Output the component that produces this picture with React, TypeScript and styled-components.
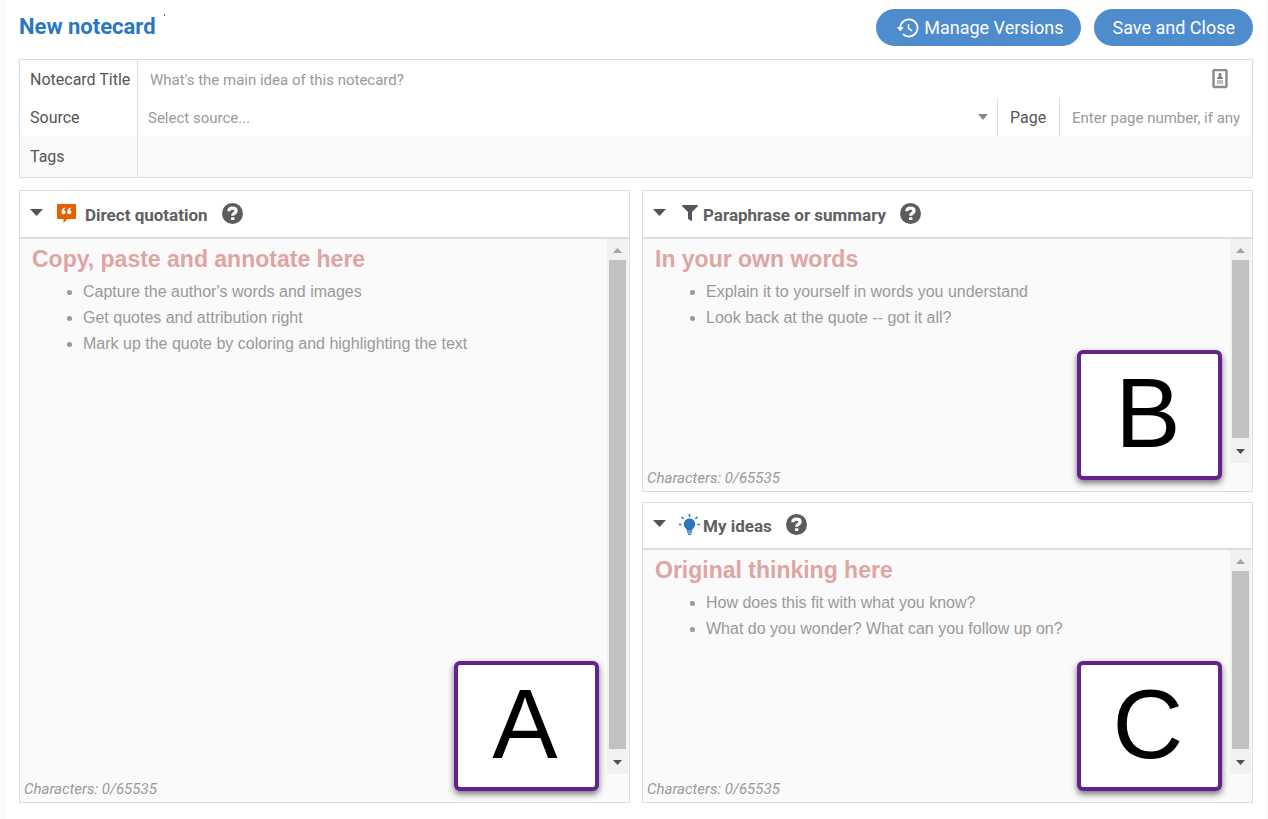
import React from 'react';
import styled, { createGlobalStyle } from 'styled-components';
import { FaFilter } from 'react-icons/fa';

const GlobalStyle = createGlobalStyle`
  *, *::before, *::after { box-sizing: border-box; }
  body {
    margin: 0;
    background: #fafafa;
    color: #555;
    font-family: Roboto, "Liberation Sans", sans-serif;
    font-size: 16px;
  }
`;

const Sheet = styled.main`
  display: flex;
  flex-direction: column;
  min-height: 100vh;
  margin: 0 3px 0 6px;
  padding: 9px 12px 16px 13px;
  background: #fff;
`;

const Header = styled.header`
  display: flex;
  justify-content: space-between;
  align-items: flex-start;
  margin-bottom: 13px;
`;

const TitleGroup = styled.div`
  display: flex;
  align-items: flex-start;
  gap: 8px;
  padding-top: 5px;
`;

const PageTitle = styled.h1`
  margin: 0;
  font-size: 22px;
  line-height: 25px;
  font-weight: 700;
  color: #2a77c0;
`;

const Tick = styled.span`
  width: 1px;
  height: 2px;
  background: #2a77c0;
`;

const Actions = styled.div`
  display: flex;
  gap: 13px;
`;

const PillButton = styled.button`
  display: flex;
  align-items: center;
  gap: 5px;
  height: 37px;
  padding: 0 18px;
  border: 0;
  border-radius: 19px;
  background: #4e8ccd;
  color: #fff;
  font-family: inherit;
  font-size: 18px;
`;

const Details = styled.section`
  margin-bottom: 12px;
  border: 1px solid #ddd;
`;

const DetailRow = styled.div<{ $shaded?: boolean }>`
  display: flex;
  min-height: ${p => (p.$shaded ? 41 : 38)}px;
  background: ${p => (p.$shaded ? '#fafafa' : '#fff')};
`;

const FieldLabel = styled.label<{ $inner?: boolean }>`
  display: flex;
  flex: none;
  align-items: center;
  width: ${p => (p.$inner ? 63 : 118)}px;
  padding-left: ${p => (p.$inner ? 12 : 10)}px;
  border: 0 solid #ddd;
  border-right-width: 1px;
  border-left-width: ${p => (p.$inner ? 1 : 0)}px;
  white-space: nowrap;
`;

const TextInput = styled.input<{ $narrow?: boolean }>`
  flex: ${p => (p.$narrow ? '0 0 192px' : '1 1 0')};
  min-width: 0;
  padding: 2px 12px 0;
  border: 0;
  background: transparent;
  color: #555;
  font-family: inherit;
  font-size: 15px;
  &::placeholder { color: #999; opacity: 1; }
`;

const BadgeButton = styled.button`
  display: flex;
  align-items: center;
  padding: 0;
  margin-right: 24px;
  border: 0;
  background: none;
`;

const SelectWrap = styled.div`
  display: flex;
  flex: 1;
  align-items: center;
  padding-right: 9px;
`;

const SourceSelect = styled.select`
  flex: 1;
  height: 100%;
  padding: 2px 10px 0;
  border: 0;
  appearance: none;
  background: transparent;
  color: #999;
  font-family: inherit;
  font-size: 15px;
`;

const Panels = styled.div`
  display: grid;
  flex: 1;
  grid-template-columns: 1fr 1fr;
  grid-template-rows: 1fr 1fr;
  gap: 10px 12px;
`;

const PanelBox = styled.section<{ $tall?: boolean }>`
  position: relative;
  display: flex;
  flex-direction: column;
  min-height: 260px;
  grid-row: ${p => (p.$tall ? 'span 2' : 'auto')};
  border: 1px solid #ddd;
  background: #fafafa;
`;

const PanelHeader = styled.div<{ $compact?: boolean }>`
  display: flex;
  align-items: center;
  height: ${p => (p.$compact ? 47 : 48)}px;
  padding: 0 10px;
  border-bottom: 2px solid #ddd;
  background: #fff;
`;

const CollapseButton = styled.button`
  display: flex;
  padding: 0 0 3px;
  border: 0;
  background: none;
`;

const IconSlot = styled.span<{ $gap: number }>`
  display: flex;
  justify-content: center;
  width: 21px;
  margin-left: 13px;
  margin-right: ${p => p.$gap}px;
  padding-bottom: 2px;
`;

const PanelTitle = styled.h2`
  margin: 0;
  padding-top: 2px;
  font-size: 17px;
  line-height: 24px;
  font-weight: 700;
  color: #606060;
`;

const HelpButton = styled.button`
  display: flex;
  margin-left: 14px;
  padding: 0 0 2px;
  border: 0;
  background: none;
`;

const PanelBody = styled.div`
  display: flex;
  flex: 1;
`;

const Prompt = styled.div`
  flex: 1;
  padding: 6px 12px 0;
  font-family: "Liberation Sans", Arial, sans-serif;
  color: #999;
`;

const PromptHeading = styled.h3`
  margin: 0 0 6px;
  font-size: 23px;
  line-height: 28px;
  color: #dea5a3;
`;

const PromptList = styled.ul`
  margin: 0;
  padding-left: 51px;
  line-height: 26px;
`;

const Track = styled.div`
  display: flex;
  flex-direction: column;
  align-items: center;
  width: 21px;
  margin-right: 1px;
  background: #f1f1f1;
`;

const Thumb = styled.div`
  flex: 1;
  width: 17px;
  background: #c1c1c1;
`;

const ArrowCell = styled.div<{ $end?: boolean }>`
  display: flex;
  align-items: center;
  height: ${p => (p.$end ? 25 : 21)}px;
  padding-top: 2px;
`;

const Counter = styled.p`
  height: 28px;
  margin: 0;
  padding: 0 4px;
  font-size: 15px;
  line-height: 30px;
  font-style: italic;
  color: #999;
`;

const Marker = styled.div`
  position: absolute;
  right: 30px;
  bottom: 11px;
  width: 145px;
  height: 130px;
  padding-right: 3px;
  border: 4px solid #65218c;
  border-radius: 6px;
  background: #fff;
  box-shadow: 0 3px 6px rgba(0, 0, 0, 0.55);
  color: #000;
  font-family: "Liberation Sans", Arial, sans-serif;
  font-size: 98px;
  line-height: 118px;
  text-align: center;
`;

function Triangle({ width, height, color, up }: { width: number; height: number; color: string; up?: boolean }) {
  const points = up ? `0,${height} ${width / 2},0 ${width},${height}` : `0,0 ${width},0 ${width / 2},${height}`;
  return (
    <svg width={width} height={height} aria-hidden="true">
      <polygon points={points} fill={color} />
    </svg>
  );
}

function HistoryIcon() {
  return (
    <svg width="25" height="22" viewBox="-1 0 25 22" fill="none" stroke="#fff" strokeWidth="1.7" aria-hidden="true">
      <path d="M5.300 11.200a8.600 8.600 0 1 1 2.700 6" />
      <path d="M1.800 10.300h7L5.300 14.200z" fill="#fff" stroke="none" />
      <path d="M13.500 7v4.300l3.600 2.600" strokeWidth="1.4" />
    </svg>
  );
}

function ContactBadgeIcon() {
  return (
    <svg width="16" height="20" viewBox="0 0 16 20" aria-hidden="true">
      <rect x="1.5" y="1" width="13" height="17" rx="1" fill="#fff" stroke="#8a8a8a" strokeWidth="2.400" />
      <circle cx="8" cy="5.500" r="1.500" fill="#777" />
      <path d="M5.200 10c0-2 1.200-3 2.800-3s2.800 1 2.800 3z" fill="#777" />
      <path d="M5 12h6M5 14h6" stroke="#aaa" strokeWidth="1.500" />
    </svg>
  );
}

function QuoteIcon() {
  return (
    <svg width="19" height="19" viewBox="0 0 19 19" aria-hidden="true">
      <path d="M1 0h17a1 1 0 0 1 1 1v13a1 1 0 0 1-1 1H10.500L6.500 19V15H1a1 1 0 0 1-1-1V1a1 1 0 0 1 1-1z" fill="#e65f00" />
      <path
        d="M8.300 3.500C6 4 4.500 5.500 4.500 8.200a2.100 2.100 0 1 0 2.300-2.100c.1-.8.600-1.400 1.500-1.700zM14 3.500c-2.300.5-3.800 2-3.800 4.700a2.100 2.100 0 1 0 2.300-2.100c.1-.8.600-1.400 1.500-1.700z"
        fill="#fff"
      />
    </svg>
  );
}

function BulbIcon() {
  return (
    <svg width="21" height="21" viewBox="0 0 21 21" aria-hidden="true">
      <path d="M10.500 4.600a5.700 5.700 0 0 0-3.200 10.400l.7 1.700h5l.7-1.700a5.700 5.700 0 0 0-3.200-10.400z" fill="#2a77c0" />
      <path
        d="M8 18h5M9 20.200h3M10.500 0v2.700M0 10.500h2.600M18.400 10.500H21M2.600 3l2 1.900M18.400 3l-2 1.900"
        stroke="#2a77c0"
        strokeWidth="1.6"
      />
    </svg>
  );
}

function HelpIcon() {
  return (
    <svg width="21" height="21" viewBox="0 0 21 21" aria-hidden="true">
      <circle cx="10.500" cy="10.500" r="10.500" fill="#5c5c5c" />
      <path d="M6.800 8.200C6.900 5.900 8.400 5.200 10.400 5.200c2.200 0 3.700.9 3.700 2.800 0 2.400-3.400 2-3.400 4.800" fill="none" stroke="#fff" strokeWidth="3.200" />
      <rect x="9" y="14.200" width="3.400" height="2.800" rx=".5" fill="#fff" />
    </svg>
  );
}

interface PanelProps {
  title: string;
  icon: React.ReactNode;
  iconGap?: number;
  heading: string;
  items: string[];
  letter: string;
  tall?: boolean;
  compact?: boolean;
}

function Panel({ title, icon, iconGap = 3, heading, items, letter, tall, compact }: PanelProps) {
  return (
    <PanelBox $tall={tall}>
      <PanelHeader $compact={compact}>
        <CollapseButton type="button" aria-label={`Collapse ${title}`}>
          <Triangle width={13} height={7} color="#555" />
        </CollapseButton>
        <IconSlot $gap={iconGap}>{icon}</IconSlot>
        <PanelTitle>{title}</PanelTitle>
        <HelpButton type="button" aria-label={`Help: ${title}`}>
          <HelpIcon />
        </HelpButton>
      </PanelHeader>
      <PanelBody>
        <Prompt>
          <PromptHeading>{heading}</PromptHeading>
          <PromptList>
            {items.map(item => (
              <li key={item}>{item}</li>
            ))}
          </PromptList>
        </Prompt>
        <Track aria-hidden="true">
          <ArrowCell>
            <Triangle width={9} height={5} color="#a3a3a3" up />
          </ArrowCell>
          <Thumb />
          <ArrowCell $end>
            <Triangle width={9} height={5} color="#505050" />
          </ArrowCell>
        </Track>
      </PanelBody>
      <Counter>Characters: 0/65535</Counter>
      <Marker>{letter}</Marker>
    </PanelBox>
  );
}

export default function App() {
  return (
    <>
      <GlobalStyle />
      <Sheet>
        <Header>
          <TitleGroup>
            <PageTitle>New notecard</PageTitle>
            <Tick />
          </TitleGroup>
          <Actions>
            <PillButton type="button">
              <HistoryIcon />
              Manage Versions
            </PillButton>
            <PillButton type="button">Save and Close</PillButton>
          </Actions>
        </Header>

        <Details>
          <DetailRow>
            <FieldLabel htmlFor="title">Notecard Title</FieldLabel>
            <TextInput id="title" placeholder="What's the main idea of this notecard?" />
            <BadgeButton type="button" aria-label="Fill from contacts">
              <ContactBadgeIcon />
            </BadgeButton>
          </DetailRow>
          <DetailRow>
            <FieldLabel htmlFor="source">Source</FieldLabel>
            <SelectWrap>
              <SourceSelect id="source">
                <option>Select source...</option>
              </SourceSelect>
              <Triangle width={10} height={6} color="#888" />
            </SelectWrap>
            <FieldLabel htmlFor="page" $inner>
              Page
            </FieldLabel>
            <TextInput id="page" placeholder="Enter page number, if any" $narrow />
          </DetailRow>
          <DetailRow $shaded>
            <FieldLabel htmlFor="tags">Tags</FieldLabel>
            <TextInput id="tags" />
          </DetailRow>
        </Details>

        <Panels>
          <Panel
            tall
            title="Direct quotation"
            icon={<QuoteIcon />}
            iconGap={8}
            heading="Copy, paste and annotate here"
            items={[
              "Capture the author's words and images",
              'Get quotes and attribution right',
              'Mark up the quote by coloring and highlighting the text',
            ]}
            letter="A"
          />
          <Panel
            title="Paraphrase or summary"
            icon={<FaFilter size={16} color="#555" />}
            heading="In your own words"
            items={['Explain it to yourself in words you understand', 'Look back at the quote -- got it all?']}
            letter="B"
          />
          <Panel
            compact
            title="My ideas"
            icon={<BulbIcon />}
            heading="Original thinking here"
            items={['How does this fit with what you know?', 'What do you wonder? What can you follow up on?']}
            letter="C"
          />
        </Panels>
      </Sheet>
    </>
  );
}
